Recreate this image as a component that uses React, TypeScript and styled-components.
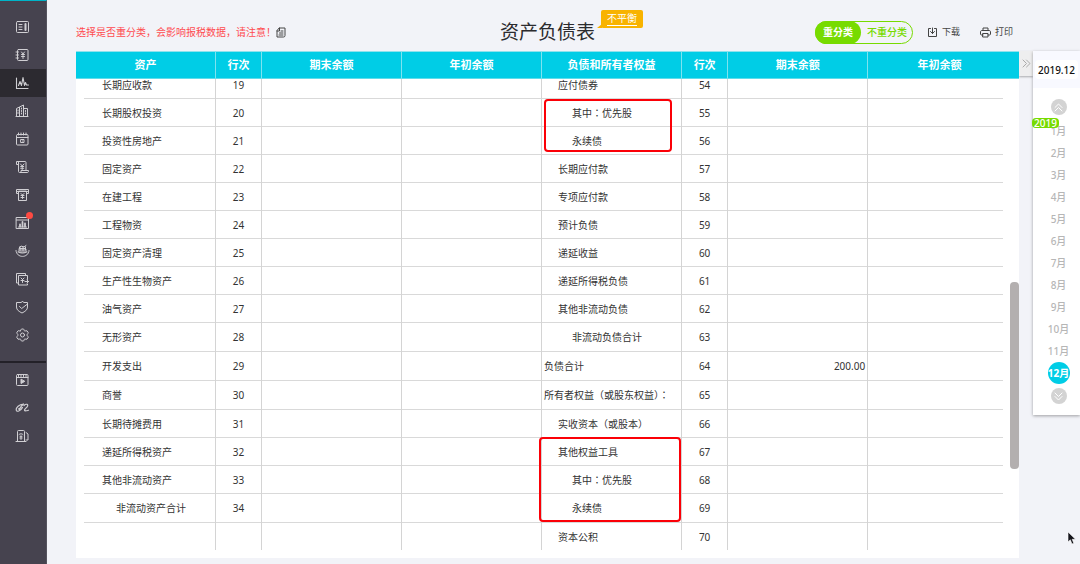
import React, { useLayoutEffect, useRef, useState } from 'react';
import styled, { createGlobalStyle, css } from 'styled-components';

const GlobalStyle = createGlobalStyle`
  * { box-sizing: border-box; }
  body {
    margin: 0;
    background: #f2f3f8;
    color: #333;
    font-family: "Noto Sans", "Noto Sans CJK SC", sans-serif;
    font-size: 10px;
    line-height: 14px;
  }
  button, input { font: inherit; color: inherit; }
  button { border: 0; padding: 0; background: none; cursor: pointer; }
`;

const cyan = '#00cde6';
const green = '#77db00';

/* ---------- shell ---------- */

const Shell = styled.div`
  position: relative;
  display: flex;
  height: 100vh;
  min-height: 440px;
`;

const Sidebar = styled.nav`
  flex: none;
  width: 47px;
  padding-top: 12px;
  background: #46434f;
  border-top: 1px solid #00b4c8;
  border-right: 1px solid #56545f;
`;

const NavList = styled.ul`
  list-style: none;
  margin: 0;
  padding: 0;

  & + & {
    margin-top: 12px;
    padding-top: 3px;
    border-top: 2px solid #232128;
  }
`;

const NavLink = styled.a<{ $active?: boolean }>`
  position: relative;
  display: flex;
  align-items: center;
  height: 28px;
  padding-left: 15px;
  color: #d0cfd3;
  background: ${(p) => (p.$active ? '#2c2a30' : 'transparent')};
`;

const AlertDot = styled.span`
  position: absolute;
  top: 3px;
  left: 26px;
  width: 7px;
  height: 7px;
  border-radius: 50%;
  background: #ff4a42;
`;

const LineIcon = styled.svg`
  display: block;
  flex: none;
  fill: none;
  stroke: currentColor;
  stroke-width: 1;
  stroke-linecap: round;
  stroke-linejoin: round;
`;

const Main = styled.main`
  flex: 1;
  min-width: 0;
  display: flex;
  flex-direction: column;
  padding: 0 0 6px 29px;
`;

/* ---------- title bar ---------- */

const TitleBar = styled.header`
  flex: none;
  display: grid;
  grid-template-columns: 1fr auto 1fr;
  align-items: center;
  height: 51px;
  padding-top: 13px;
`;

const Note = styled.p`
  display: flex;
  align-items: center;
  margin: 0;
  color: #ff4b50;
  white-space: nowrap;

  svg { color: #444; }
`;

const TitleWrap = styled.div`
  position: relative;
`;

const Title = styled.h1`
  margin: 0;
  font-size: 19px;
  line-height: 24px;
  font-weight: 400;
  color: #2b2b2e;
`;

const Unbalanced = styled.a`
  position: absolute;
  left: 100%;
  bottom: 16px;
  margin-left: 6px;
  padding: 1px 6px 2px;
  border-radius: 2px;
  background: #f8b300;
  color: #fff;
  white-space: nowrap;
  text-decoration: none;

  span { display: block; border-bottom: 1px solid #fff; }

  &::before {
    content: "";
    position: absolute;
    left: -4px;
    bottom: 0;
    border: solid transparent;
    border-width: 5px 0 0 5px;
    border-bottom: 4px solid #f8b300;
    border-top: 0;
  }
`;

const Actions = styled.div`
  display: flex;
  justify-content: flex-end;
  align-items: center;
  padding-right: 6px;
`;

const Segmented = styled.div`
  display: flex;
  height: 23px;
  margin-right: 14px;
  border: 1px solid ${green};
  border-radius: 12px;
`;

const Segment = styled.button<{ $on: boolean }>`
  padding: 0 5px;
  border-radius: 12px;
  color: ${green};
  font-weight: 500;
  ${(p) =>
    p.$on &&
    css`
      margin: -1px 1px -1px -1px;
      padding: 0 8px;
      background: ${green};
      color: #fff;
      font-weight: 700;
    `}
`;

const Action = styled.button`
  display: flex;
  align-items: center;
  gap: 4px;
  font-size: 9px;
  color: #444;

  & + & { margin-left: 20px; }
`;

/* ---------- table ---------- */

const Card = styled.section`
  position: relative;
  flex: 1;
  min-height: 0;
  display: flex;
  flex-direction: column;
  padding-bottom: 8px;
  background: #fff;
`;

const Scroller = styled.div`
  flex: 1;
  min-height: 0;
  overflow-y: auto;
  scrollbar-width: none;
`;

const ScrollThumb = styled.div`
  position: absolute;
  top: 45.5%;
  right: 0;
  width: 9px;
  height: 37%;
  border-radius: 4px;
  background: #b3afaf;
`;

const Sheet = styled.table`
  width: 100%;
  table-layout: fixed;
  border-collapse: separate;
  border-spacing: 0;

  .name, .amount { width: 14.85%; }
  .line { width: 46px; }
`;

const HeadCell = styled.th`
  position: sticky;
  top: 0;
  z-index: 2;
  height: 28px;
  padding: 0;
  background: ${cyan};
  color: #fff;
  font-size: 11px;
  font-weight: 700;
  border-top: 1px solid #8fe2ec;
  border-bottom: 1px solid #5fdcea;
  border-right: 1px solid #7fe3ef;

  &:last-child { border-right: 0; padding-right: 8px; }
`;

const Row = styled.tr<{ $tall?: boolean }>`
  height: ${(p) => (p.$tall ? 29 : 28)}px;
`;

const rule = 'linear-gradient(#d9d9d9, #d9d9d9) no-repeat';

const Cell = styled.td<{ $align?: string; $indent?: number }>`
  position: relative;
  padding: 0 2px 1px;
  padding-left: ${(p) => 2 + (p.$indent ?? 0) * 14}px;
  text-align: ${(p) => p.$align ?? 'left'};
  white-space: nowrap;
  border-right: 1px solid #d4d4d4;
  background: ${rule} right bottom / 100% 1px;

  &:first-child {
    padding-left: ${(p) => 12 + (p.$indent ?? 0) * 14}px;
    background: ${rule} right bottom / calc(100% - 8px) 1px;
  }
  &:last-child {
    border-right: 0;
    background: ${rule} left bottom / calc(100% - 16px) 1px;
  }
  ${Row}:last-child & { background: none; }
`;

const Highlight = styled.span<{ $kind: 'inset' | 'full' }>`
  position: absolute;
  z-index: 1;
  border: 2px solid #fb0007;
  border-radius: 4px;
  pointer-events: none;
  ${(p) =>
    p.$kind === 'inset'
      ? css`top: 0; left: 2px; right: 9px; height: 53px;`
      : css`top: -1px; left: -3px; right: 0; height: 85px;`}
`;

/* Fullwidth colon that sits in the middle of its cell. */
const MidPunct = styled.span`
  font-family: "Noto Sans CJK TC", sans-serif;
`;

/* ---------- period panel ---------- */

const PeriodDock = styled.aside`
  flex: none;
  display: flex;
  align-items: flex-start;
  padding-top: 51px;
`;

const CollapseButton = styled.button`
  display: flex;
  align-items: center;
  justify-content: center;
  width: 14px;
  height: 25px;
  background: #eeeeef;
  color: #aaa;
  box-shadow: 0 1px 2px rgba(0, 0, 0, 0.3);
`;

const PeriodPanel = styled.div`
  width: 47px;
  padding-bottom: 11px;
  background: #fff;
  box-shadow: 0 1px 3px rgba(0, 0, 0, 0.35);
`;

const PeriodHead = styled.div`
  padding: 9px 2px;
  background: #f8f9ff;
`;

const PeriodInput = styled.input`
  display: block;
  width: 100%;
  height: 19px;
  padding: 0;
  border: 0;
  border-radius: 4px;
  background: #fff;
  color: #111;
  font-weight: 500;
  text-align: center;
`;

const MonthColumn = styled.div`
  position: relative;
  display: flex;
  flex-direction: column;
  align-items: center;
  padding: 11px 0 0 4px;
`;

const RoundButton = styled.button`
  display: flex;
  align-items: center;
  justify-content: center;
  width: 16px;
  height: 16px;
  border-radius: 50%;
  background: #d3d3d3;
  color: #fff;
`;

const MonthList = styled.ul`
  list-style: none;
  margin: 5px 0 4px;
  padding: 0;
`;

const Month = styled.button<{ $on: boolean }>`
  display: block;
  width: 22px;
  height: 22px;
  border-radius: 50%;
  white-space: nowrap;
  font-weight: ${(p) => (p.$on ? 700 : 500)};
  color: ${(p) => (p.$on ? '#fff' : '#b6b6b6')};
  background: ${(p) => (p.$on ? cyan : 'transparent')};
`;

const YearTag = styled.span`
  position: absolute;
  top: 30px;
  left: -1px;
  padding: 0 2px;
  border-radius: 4px;
  background: ${green};
  color: #fff;
  line-height: 10px;
  font-weight: 500;
`;

const Pointer = styled.svg`
  position: absolute;
  right: 4px;
  bottom: 19px;
`;

/* ---------- data ---------- */

type Item = [name: string, indent: number];
type Line = {
  left?: Item;
  leftNo?: number;
  right: Item;
  rightNo: number;
  end?: string;
  tall?: boolean;
  mark?: 'inset' | 'full';
};

const lines: Line[] = [
  { left: ['长期应收款', 1], leftNo: 19, right: ['应付债券', 1], rightNo: 54 },
  { left: ['长期股权投资', 1], leftNo: 20, right: ['其中：优先股', 2], rightNo: 55, mark: 'inset' },
  { left: ['投资性房地产', 1], leftNo: 21, right: ['永续债', 2], rightNo: 56 },
  { left: ['固定资产', 1], leftNo: 22, right: ['长期应付款', 1], rightNo: 57 },
  { left: ['在建工程', 1], leftNo: 23, right: ['专项应付款', 1], rightNo: 58 },
  { left: ['工程物资', 1], leftNo: 24, right: ['预计负债', 1], rightNo: 59 },
  { left: ['固定资产清理', 1], leftNo: 25, right: ['递延收益', 1], rightNo: 60 },
  { left: ['生产性生物资产', 1], leftNo: 26, right: ['递延所得税负债', 1], rightNo: 61 },
  { left: ['油气资产', 1], leftNo: 27, right: ['其他非流动负债', 1], rightNo: 62 },
  { left: ['无形资产', 1], leftNo: 28, right: ['非流动负债合计', 2], rightNo: 63, tall: true },
  { left: ['开发支出', 1], leftNo: 29, right: ['负债合计', 0], rightNo: 64, end: '200.00', tall: true },
  { left: ['商誉', 1], leftNo: 30, right: ['所有者权益（或股东权益）：', 0], rightNo: 65, tall: true },
  { left: ['长期待摊费用', 1], leftNo: 31, right: ['实收资本（或股本）', 1], rightNo: 66 },
  { left: ['递延所得税资产', 1], leftNo: 32, right: ['其他权益工具', 1], rightNo: 67, mark: 'full' },
  { left: ['其他非流动资产', 1], leftNo: 33, right: ['其中：优先股', 2], rightNo: 68 },
  { left: ['非流动资产合计', 2], leftNo: 34, right: ['永续债', 2], rightNo: 69, tall: true },
  { right: ['资本公积', 1], rightNo: 70 },
];

const columns = [
  ['资产', 'name'],
  ['行次', 'line'],
  ['期末余额', 'amount'],
  ['年初余额', 'amount'],
  ['负债和所有者权益', 'name'],
  ['行次', 'line'],
  ['期末余额', 'amount'],
  ['年初余额', 'last'],
];

type Nav = { label: string; art: React.ReactNode; active?: boolean; alert?: boolean };

const mainNav: Nav[] = [
  { label: '首页', art: <><rect x="1.5" y="1.5" width="12" height="11" rx="1" /><path d="M4 4.5h3M4 7h3M4 9.500h3" /><path d="M10.500 4v6" strokeWidth="2" /></> },
  { label: '凭证', art: <><rect x="2.500" y="1.500" width="10.500" height="11" rx="1" /><path d="M1 4h2.500M1 7h2.500M1 10h2.500M6.500 4l1.500 2 1.500-2M8 6v4.500M6.500 6.500h3M6.500 8.500h3" /></> },
  { label: '报表', active: true, art: <path d="M1.500 2v10.500h11.500M3.500 9.500l1.500-4 1.500 4 1.500-8 1.500 8 1-3 1 2.500h2" strokeWidth="1.100" /> },
  { label: '资产', art: <><path d="M1.500 12.500v-8l3-1.500v9.500M4.500 12.500V3l4-2v11.500M8.500 4.500h4v8M1 12.500h12" /><path d="M6.500 4v7M10.500 6.500v5M3 6v5" strokeDasharray="1 1.500" /></> },
  { label: '日程', art: <><rect x="1.500" y="2.500" width="11.500" height="10.500" rx="1" /><path d="M1.500 5.500h11.500M3.500 1v2M6 1v2M8.500 1v2M11 1v2" /><rect x="6" y="7.500" width="3" height="3" /><path d="M7.500 9h.1" /></> },
  { label: '票据', art: <path d="M3.500 4.500h-2v-3h8.500a1 1 0 0 1 1 1v8M3.500 2v9.500c0 .7.500 1 1 1h8c.7 0 1-.5 1-2H6v2M5.500 4L7.200 6 9 4M7.200 6v3.500M5.700 6.500h3M5.700 8.300h3" /> },
  { label: '出票', art: <><path d="M3 5.500H1.500v-4h12v4H12M3.500 3.500v9h8v-9zM2.500 3.500h10" /><path d="M6 5.500l1.500 1.500L9 5.500M7.500 7v3.500M6 7.500h3M6 9.500h3" /></> },
  { label: '统计', alert: true, art: <><rect x="1.500" y="1.500" width="12" height="11" /><path d="M1.500 4h12M3.500 11h8" /><path d="M5 10.500V8.500M7.500 10.500V6M10 10.500V7.500" strokeWidth="1.800" /></> },
  { label: '工资', art: <path d="M1 6.500c.5 8 12.500 8 13 0M3 8h9M3.500 6h8M4 4l2-2 3 1 2-1.500M4.500 4.500h6M5 2.500v4M8 2.500v4M10.500 3v3M3.500 8c1 1.500 7 1.500 8 0" /> },
  { label: '账簿', art: <><path d="M3.500 11H1.500V1.500h9v2" /><path d="M12.500 7.500v-4h-9v9.500h9v-1M6 6l1.500 1.500L9 6M7.500 7.500v3M6 8.500h3M10 9.500h3.500M12 8l1.500 1.500-1.500 1.500" /></> },
  { label: '税务', art: <path d="M7.500 1.500l-1.500 1H1.500V7c0 3 2.500 4.500 5.500 6 3-1.500 5.500-3 5.500-6V2.500H9zM4.500 6.500l2.200 2L12.500 4" /> },
  { label: '设置', art: <><path d="M5.300 3c.6 0 .8-2 1.200-2h2c.4 0 .6 2 1.200 2 .5.300 2-.6 2.300-.2l1.300 2c.2.400-1.300 1.300-1.300 2.200s1.500 1.800 1.300 2.200l-1.300 2c-.3.400-1.800-.5-2.300-.2-.6 0-.8 2-1.200 2h-2c-.4 0-.6-2-1.200-2-.5-.3-2 .6-2.300.2l-1.300-2C1.500 8.800 3 7.900 3 7S1.500 5.200 1.700 4.800l1.300-2c.3-.4 1.800.5 2.300.2z" /><circle cx="7.500" cy="7" r="2" /></> },
];

const extraNav: Nav[] = [
  { label: '视频', art: <><rect x="1.500" y="1.500" width="11.500" height="11" rx="1" /><path d="M1.500 4.500h11.500M3.500 2v1.500M6 2v1.500M8.500 2v1.500M11 2v1.500" /><path d="M6 6.500v4l3.500-2z" fill="currentColor" /></> },
  { label: '商城', art: <path d="M8.500 3C4 3.500 1 6.500 1.200 9c.3 2.500 4.500 1 6.300-2.500M6 6.500L3.500 8M8.500 3C6 5 5 7 4.500 8.500M9 4.500c2-2 4.500-1.500 3.500.8-.7 1.500-3 2.500-3 3.700 0 1.200 2 .8 4 .2" strokeWidth="1.200" /> },
  { label: '加油', art: <><path d="M2.500 12.500V2.500a1 1 0 0 1 1-1h5a1 1 0 0 1 1 1v10M1 12.500h10M11 3.500l2 1.500v6h-2" /><path d="M4 5.500c1-1 3-1 4 0M5 7.300h2M6 7v3.500M4.800 9h2.400" /></> },
];

/* ---------- parts ---------- */

function Text({ children }: { children: string }) {
  return (
    <>
      {children.split(/(：)/).map((part, i) =>
        part === '：' ? <MidPunct key={i}>{part}</MidPunct> : part,
      )}
    </>
  );
}

function NavItems({ items }: { items: Nav[] }) {
  return (
    <NavList>
      {items.map((n) => (
        <li key={n.label}>
          <NavLink href="#" aria-label={n.label} $active={n.active}>
            <LineIcon width="15" height="14" viewBox="0 0 15 14">{n.art}</LineIcon>
            {n.alert && <AlertDot />}
          </NavLink>
        </li>
      ))}
    </NavList>
  );
}

export default function App() {
  const scroller = useRef<HTMLDivElement>(null);
  const [reclass, setReclass] = useState(true);
  const [month, setMonth] = useState(12);

  useLayoutEffect(() => {
    if (scroller.current) scroller.current.scrollTop = 8;
  }, []);

  return (
    <>
      <GlobalStyle />
      <Shell>
        <Sidebar>
          <NavItems items={mainNav} />
          <NavItems items={extraNav} />
        </Sidebar>

        <Main>
          <TitleBar>
            <Note>
              选择是否重分类，会影响报税数据，请注意！
              <LineIcon width="10" height="11" viewBox="0 0 10 11">
                <path d="M3.500 1h5.500v7.500a1.500 1.500 0 0 1-1.500 1.500H1V4zM3.500 1v3H1M5 4h2M3.500 6H7M3 8h4" />
              </LineIcon>
            </Note>
            <TitleWrap>
              <Title>资产负债表</Title>
              <Unbalanced href="#"><span>不平衡</span></Unbalanced>
            </TitleWrap>
            <Actions>
              <Segmented>
                <Segment $on={reclass} onClick={() => setReclass(true)}>重分类</Segment>
                <Segment $on={!reclass} onClick={() => setReclass(false)}>不重分类</Segment>
              </Segmented>
              <Action>
                <LineIcon width="11" height="11" viewBox="0 0 11 11">
                  <path d="M3.500 1.500H1.500v8h8v-8h-2M5.500 1v5.500M3.500 4.500l2 2 2-2" />
                </LineIcon>
                下载
              </Action>
              <Action>
                <LineIcon width="11" height="11" viewBox="0 0 11 11">
                  <path d="M3 3.500V1h5v2.500M3 8H1.500C.8 8 .5 7.500.5 7V5c0-1 .5-1.500 1.500-1.500h7c1 0 1.500.5 1.500 1.500v2c0 .5-.3 1-1 1H8M3 6.500h5V10H3z" />
                </LineIcon>
                打印
              </Action>
            </Actions>
          </TitleBar>

          <Card>
            <Scroller ref={scroller}>
              <Sheet>
                <thead>
                  <tr>
                    {columns.map(([label, kind], i) => (
                      <HeadCell key={i} scope="col" className={kind}>{label}</HeadCell>
                    ))}
                  </tr>
                </thead>
                <tbody>
                  {lines.map((l) => (
                    <Row key={l.rightNo} $tall={l.tall}>
                      <Cell $indent={l.left?.[1]}>{l.left?.[0]}</Cell>
                      <Cell $align="center">{l.leftNo}</Cell>
                      <Cell />
                      <Cell />
                      <Cell $indent={l.right[1]}>
                        <Text>{l.right[0]}</Text>
                        {l.mark && <Highlight $kind={l.mark} />}
                      </Cell>
                      <Cell $align="center">{l.rightNo}</Cell>
                      <Cell $align="right">{l.end}</Cell>
                      <Cell />
                    </Row>
                  ))}
                </tbody>
              </Sheet>
            </Scroller>
            <ScrollThumb />
          </Card>
        </Main>

        <PeriodDock>
          <CollapseButton aria-label="收起">
            <LineIcon width="9" height="9" viewBox="0 0 9 9"><path d="M1 1l3.500 3.500L1 8M4.500 1L8 4.500 4.500 8" /></LineIcon>
          </CollapseButton>
          <PeriodPanel>
            <PeriodHead>
              <PeriodInput aria-label="期间" value={`2019.${month}`} readOnly />
            </PeriodHead>
            <MonthColumn>
              <RoundButton aria-label="上一年">
                <LineIcon width="9" height="9" viewBox="0 0 9 9"><path d="M1 4.500L4.500 1 8 4.500M1 8l3.500-3.500L8 8" /></LineIcon>
              </RoundButton>
              <MonthList>
                {Array.from({ length: 12 }, (_, i) => i + 1).map((m) => (
                  <li key={m}>
                    <Month $on={m === month} onClick={() => setMonth(m)}>{m}月</Month>
                  </li>
                ))}
              </MonthList>
              <YearTag>2019</YearTag>
              <RoundButton aria-label="下一年">
                <LineIcon width="9" height="9" viewBox="0 0 9 9"><path d="M1 1l3.500 3.500L8 1M1 4.500L4.500 8 8 4.500" /></LineIcon>
              </RoundButton>
            </MonthColumn>
          </PeriodPanel>
        </PeriodDock>

        <Pointer width="9" height="14" viewBox="0 0 9 14">
          <path d="M1 1v10l2.300-2.200L5 13l1.800-.8L5.200 8.300H8.500z" fill="#15151c" stroke="#fff" strokeWidth=".6" />
        </Pointer>
      </Shell>
    </>
  );
}
